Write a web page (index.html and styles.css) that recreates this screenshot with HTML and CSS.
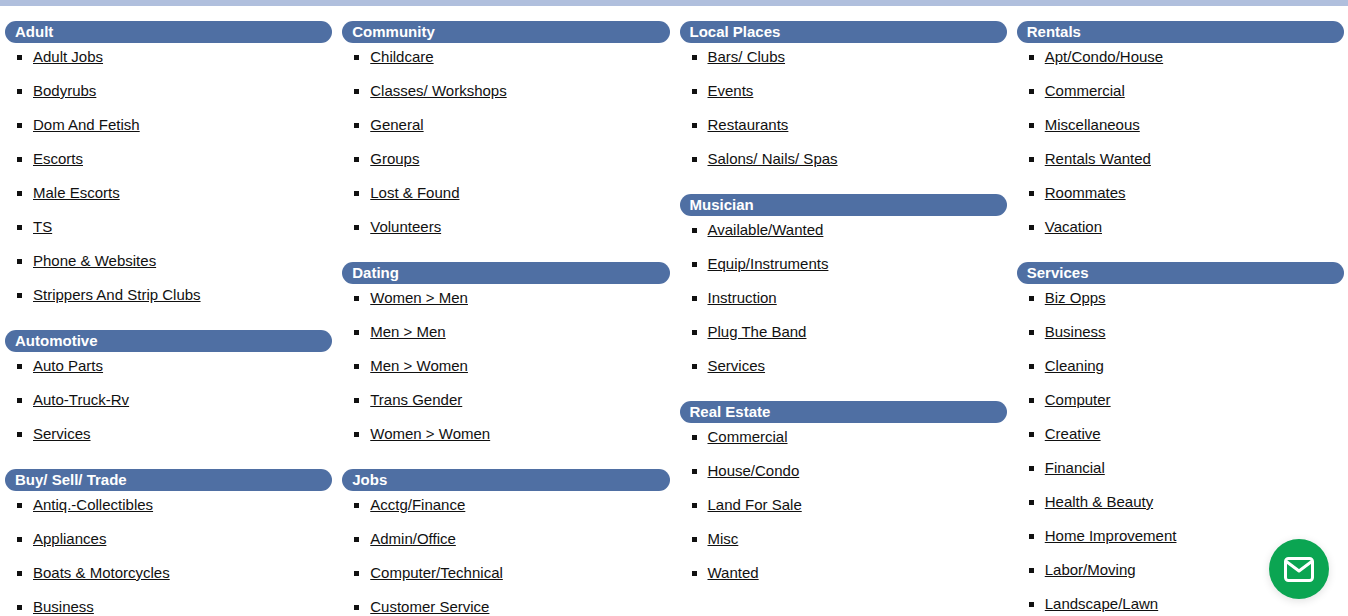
FILE: index.html
```html
<!DOCTYPE html>
<html lang="en">
  <head>
    <meta charset="UTF-8" />
    <meta name="viewport" content="width=device-width, initial-scale=1.0" />
    <title>Classifieds Categories</title>
    <link rel="stylesheet" href="styles.css">
  </head>
  <body>
    <div class="top-bar"></div>
    <div class="categories">
      <div class="column">
        <div class="section">
          <h3>Adult</h3>
          <ul>
            <li><a href="#">Adult Jobs</a></li>
            <li><a href="#">Bodyrubs</a></li>
            <li><a href="#">Dom And Fetish</a></li>
            <li><a href="#">Escorts</a></li>
            <li><a href="#">Male Escorts</a></li>
            <li><a href="#">TS</a></li>
            <li><a href="#">Phone &amp; Websites</a></li>
            <li><a href="#">Strippers And Strip Clubs</a></li>
          </ul>
        </div>
        <div class="section">
          <h3>Automotive</h3>
          <ul>
            <li><a href="#">Auto Parts</a></li>
            <li><a href="#">Auto-Truck-Rv</a></li>
            <li><a href="#">Services</a></li>
          </ul>
        </div>
        <div class="section">
          <h3>Buy/ Sell/ Trade</h3>
          <ul>
            <li><a href="#">Antiq.-Collectibles</a></li>
            <li><a href="#">Appliances</a></li>
            <li><a href="#">Boats &amp; Motorcycles</a></li>
            <li><a href="#">Business</a></li>
          </ul>
        </div>
      </div>
      <div class="column">
        <div class="section">
          <h3>Community</h3>
          <ul>
            <li><a href="#">Childcare</a></li>
            <li><a href="#">Classes/ Workshops</a></li>
            <li><a href="#">General</a></li>
            <li><a href="#">Groups</a></li>
            <li><a href="#">Lost &amp; Found</a></li>
            <li><a href="#">Volunteers</a></li>
          </ul>
        </div>
        <div class="section">
          <h3>Dating</h3>
          <ul>
            <li><a href="#">Women &gt; Men</a></li>
            <li><a href="#">Men &gt; Men</a></li>
            <li><a href="#">Men &gt; Women</a></li>
            <li><a href="#">Trans Gender</a></li>
            <li><a href="#">Women &gt; Women</a></li>
          </ul>
        </div>
        <div class="section">
          <h3>Jobs</h3>
          <ul>
            <li><a href="#">Acctg/Finance</a></li>
            <li><a href="#">Admin/Office</a></li>
            <li><a href="#">Computer/Technical</a></li>
            <li><a href="#">Customer Service</a></li>
          </ul>
        </div>
      </div>
      <div class="column">
        <div class="section">
          <h3>Local Places</h3>
          <ul>
            <li><a href="#">Bars/ Clubs</a></li>
            <li><a href="#">Events</a></li>
            <li><a href="#">Restaurants</a></li>
            <li><a href="#">Salons/ Nails/ Spas</a></li>
          </ul>
        </div>
        <div class="section">
          <h3>Musician</h3>
          <ul>
            <li><a href="#">Available/Wanted</a></li>
            <li><a href="#">Equip/Instruments</a></li>
            <li><a href="#">Instruction</a></li>
            <li><a href="#">Plug The Band</a></li>
            <li><a href="#">Services</a></li>
          </ul>
        </div>
        <div class="section">
          <h3>Real Estate</h3>
          <ul>
            <li><a href="#">Commercial</a></li>
            <li><a href="#">House/Condo</a></li>
            <li><a href="#">Land For Sale</a></li>
            <li><a href="#">Misc</a></li>
            <li><a href="#">Wanted</a></li>
          </ul>
        </div>
      </div>
      <div class="column">
        <div class="section">
          <h3>Rentals</h3>
          <ul>
            <li><a href="#">Apt/Condo/House</a></li>
            <li><a href="#">Commercial</a></li>
            <li><a href="#">Miscellaneous</a></li>
            <li><a href="#">Rentals Wanted</a></li>
            <li><a href="#">Roommates</a></li>
            <li><a href="#">Vacation</a></li>
          </ul>
        </div>
        <div class="section">
          <h3>Services</h3>
          <ul>
            <li><a href="#">Biz Opps</a></li>
            <li><a href="#">Business</a></li>
            <li><a href="#">Cleaning</a></li>
            <li><a href="#">Computer</a></li>
            <li><a href="#">Creative</a></li>
            <li><a href="#">Financial</a></li>
            <li><a href="#">Health &amp; Beauty</a></li>
            <li><a href="#">Home Improvement</a></li>
            <li><a href="#">Labor/Moving</a></li>
            <li><a href="#">Landscape/Lawn</a></li>
          </ul>
        </div>
      </div>
    </div>
    <a href="#" class="chat-btn" aria-label="Message us">
      <svg width="30" height="25" viewBox="0 0 30 25" fill="none" stroke="#fff" stroke-width="3" stroke-linejoin="round" stroke-linecap="round">
        <rect x="1.5" y="1.5" width="27" height="22" rx="3" />
        <path d="M3 5 L15 14 L27 5" />
      </svg>
    </a>
  </body>
</html>
```

FILE: styles.css
```css
html,
body {
  height: 100%;
  overflow: hidden;
}
body {
  font-family: "Liberation Sans", Arial, sans-serif;
  font-size: 15px;
  line-height: 17px;
  color: #111;
  margin: 0;
  background-color: #fff;
}
.top-bar {
  height: 6px;
  background-color: #b0bfdd;
}
.categories {
  display: grid;
  grid-template-columns: repeat(4, 1fr);
  column-gap: 10px;
  padding: 15px 4px 0 5px;
}
.section {
  margin-bottom: 10px;
}
h3 {
  margin: 0;
  height: 22px;
  padding: 2px 10px 0;
  box-sizing: border-box;
  font-size: 15px;
  line-height: 18px;
  font-weight: bold;
  color: #fff;
  background-color: #4f6fa3;
  border-radius: 11px;
}
ul {
  list-style: square;
  margin: 0;
  padding: 5px 0 0 28px;
}
li {
  height: 34px;
}
li a {
  color: #111;
  text-decoration: underline;
}
.chat-btn {
  position: fixed;
  right: 19px;
  bottom: 17px;
  width: 60px;
  height: 60px;
  border-radius: 50%;
  background-color: #0ba552;
  box-shadow: 0 2px 8px rgba(0, 0, 0, 0.12);
  display: flex;
  align-items: center;
  justify-content: center;
}
```
